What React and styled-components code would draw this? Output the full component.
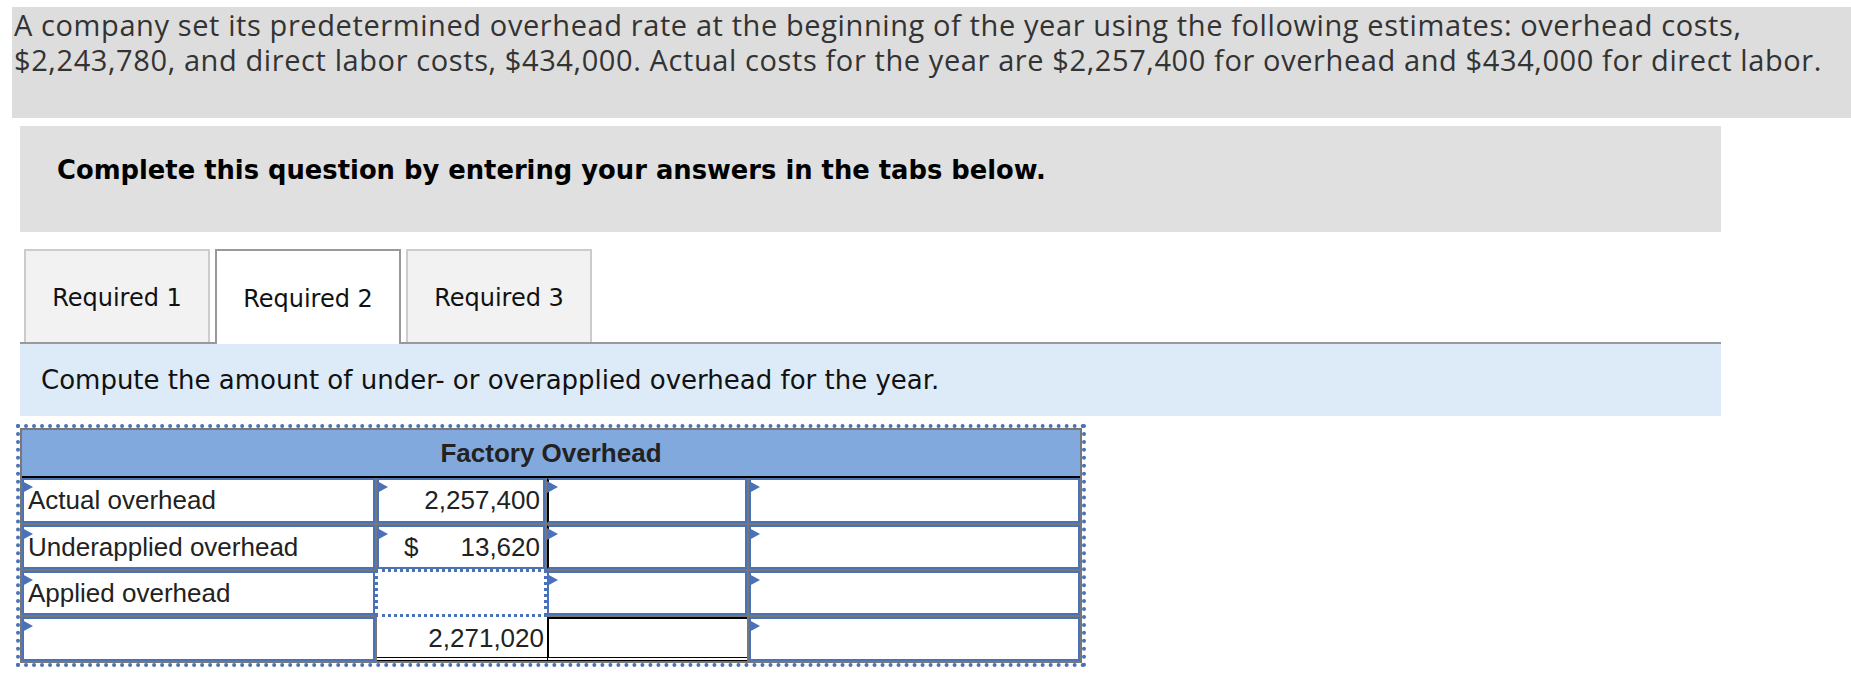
import React from "react";
import styled, { createGlobalStyle, css } from "styled-components";

const GlobalStyle = createGlobalStyle`
  html, body {
    margin: 0;
    padding: 0;
    background: #ffffff;
  }
`;

const Page = styled.div`
  padding-top: 7px;
`;

const ProblemBox = styled.div`
  margin-left: 12px;
  height: 111px;
  background: #dddddd;
  padding-left: 2px;
  font-family: "Open Sans", Lato, sans-serif;
  font-size: 29px;
  letter-spacing: 0.6px;
  line-height: 35px;
  color: #333333;
`;

const ProblemText = styled.p`
  margin: 0;
  white-space: nowrap;
`;

const InstructionBar = styled.div`
  margin: 8px 0 0 20px;
  width: 1701px;
  height: 106px;
  box-sizing: border-box;
  padding: 0 0 18px 37px;
  display: flex;
  align-items: center;
  background: #e0e0e0;
  font-family: "DejaVu Sans", Verdana, sans-serif;
  font-weight: bold;
  font-size: 25.8px;
  color: #000000;
`;

const TabSection = styled.div`
  margin: 17px 0 0 20px;
  width: 1701px;
`;

const TabList = styled.div`
  display: flex;
  gap: 5px;
  padding-left: 4px;
  border-bottom: 2px solid #999999;
`;

const Tab = styled.div`
  width: 186px;
  height: 93px;
  box-sizing: border-box;
  padding-top: 3px;
  display: flex;
  align-items: center;
  justify-content: center;
  font-family: "DejaVu Sans", Tahoma, sans-serif;
  font-size: 24px;
  color: #111111;
  background: #f2f2f2;
  border: 2px solid #cccccc;
  border-bottom: none;

  ${(p) =>
    p.$active &&
    css`
      background: #ffffff;
      border-color: #999999;
      height: 95px;
      margin-bottom: -2px;
    `}
`;

const Prompt = styled.div`
  height: 72px;
  box-sizing: border-box;
  padding-left: 21px;
  display: flex;
  align-items: center;
  background: #ddeaf7;
  font-family: "DejaVu Sans", Tahoma, sans-serif;
  font-size: 26px;
  color: #111111;
`;

const Worksheet = styled.div`
  margin: 8px 0 0 16px;
  width: fit-content;
  border: 4px dotted #4a72b8;
`;

const Grid = styled.div`
  display: grid;
  grid-template-columns: 353px 168px 200px 331px;
  grid-template-rows: 46px 45px 44px 44px 44px;
  gap: 2px;
  padding: 2px;
  background: #777777;
  font-family: "Liberation Sans", Arial, sans-serif;
  font-size: 26px;
  color: #222222;
`;

const Header = styled.div`
  grid-column: 1 / -1;
  display: flex;
  align-items: center;
  justify-content: center;
  background: #82a9dd;
  box-shadow: 0 2px 0 #000000;
  font-weight: bold;
`;

const alignments = {
  left: "flex-start",
  right: "flex-end",
  split: "space-between",
};

const Cell = styled.div`
  position: relative;
  box-sizing: border-box;
  display: flex;
  align-items: center;
  justify-content: ${(p) => alignments[p.$align || "left"]};
  padding: ${(p) => (p.$align === "split" ? "0 3px 0 25px" : "0 3px 0 4px")};
  background: #ffffff;
  border: 2px solid #4a72b8;
  white-space: nowrap;

  ${(p) =>
    p.$blackLeft &&
    css`
      border-left-color: #000000;
    `}

  ${(p) =>
    p.$variant === "dotted" &&
    css`
      margin: -2px;
      z-index: 1;
      border: 3px dotted #4a72b8;
    `}

  ${(p) =>
    p.$variant === "total" &&
    css`
      border: none;
      border-bottom: 4px double #000000;
      padding-top: 2px;
    `}

  ${(p) =>
    p.$variant === "total" &&
    p.$blackLeft &&
    css`
      border-left: 2px solid #000000;
      border-top: 2px solid #000000;
    `}

  ${(p) =>
    p.$extendRight &&
    css`
      margin-right: -2px;
    `}

  ${(p) =>
    p.$flag &&
    css`
      &::before {
        content: "";
        position: absolute;
        left: -2px;
        top: 1px;
        border-left: 11px solid #4a72b8;
        border-top: 6px solid transparent;
        border-bottom: 6px solid transparent;
      }
    `}
`;

const rows = [
  [
    { text: "Actual overhead", flag: true },
    { text: "2,257,400", flag: true, align: "right" },
    { flag: true, blackLeft: true },
    { flag: true },
  ],
  [
    { text: "Underapplied overhead", flag: true },
    { text: ["$", "13,620"], flag: true, align: "split" },
    { flag: true, blackLeft: true },
    { flag: true },
  ],
  [
    { text: "Applied overhead", flag: true },
    { variant: "dotted" },
    { flag: true },
    { flag: true },
  ],
  [
    { flag: true },
    { text: "2,271,020", variant: "total", align: "right", extendRight: true },
    { variant: "total", blackLeft: true },
    { flag: true },
  ],
];

const App = () => {
  return (
    <Page>
      <GlobalStyle />
      <ProblemBox>
        <ProblemText>
          A company set its predetermined overhead rate at the beginning of the year using the following estimates: overhead costs,
          <br />
          $2,243,780, and direct labor costs, $434,000. Actual costs for the year are $2,257,400 for overhead and $434,000 for direct labor.
        </ProblemText>
      </ProblemBox>

      <InstructionBar>Complete this question by entering your answers in the tabs below.</InstructionBar>

      <TabSection>
        <TabList>
          <Tab>Required 1</Tab>
          <Tab $active>Required 2</Tab>
          <Tab>Required 3</Tab>
        </TabList>
        <Prompt>Compute the amount of under- or overapplied overhead for the year.</Prompt>
      </TabSection>

      <Worksheet>
        <Grid>
          <Header>Factory Overhead</Header>
          {rows.map((row, r) =>
            row.map((cell, c) => (
              <Cell
                key={`${r}-${c}`}
                $flag={cell.flag}
                $align={cell.align}
                $variant={cell.variant}
                $blackLeft={cell.blackLeft}
                $extendRight={cell.extendRight}
              >
                {Array.isArray(cell.text)
                  ? cell.text.map((t) => <span key={t}>{t}</span>)
                  : cell.text}
              </Cell>
            ))
          )}
        </Grid>
      </Worksheet>
    </Page>
  );
};

export default App;
